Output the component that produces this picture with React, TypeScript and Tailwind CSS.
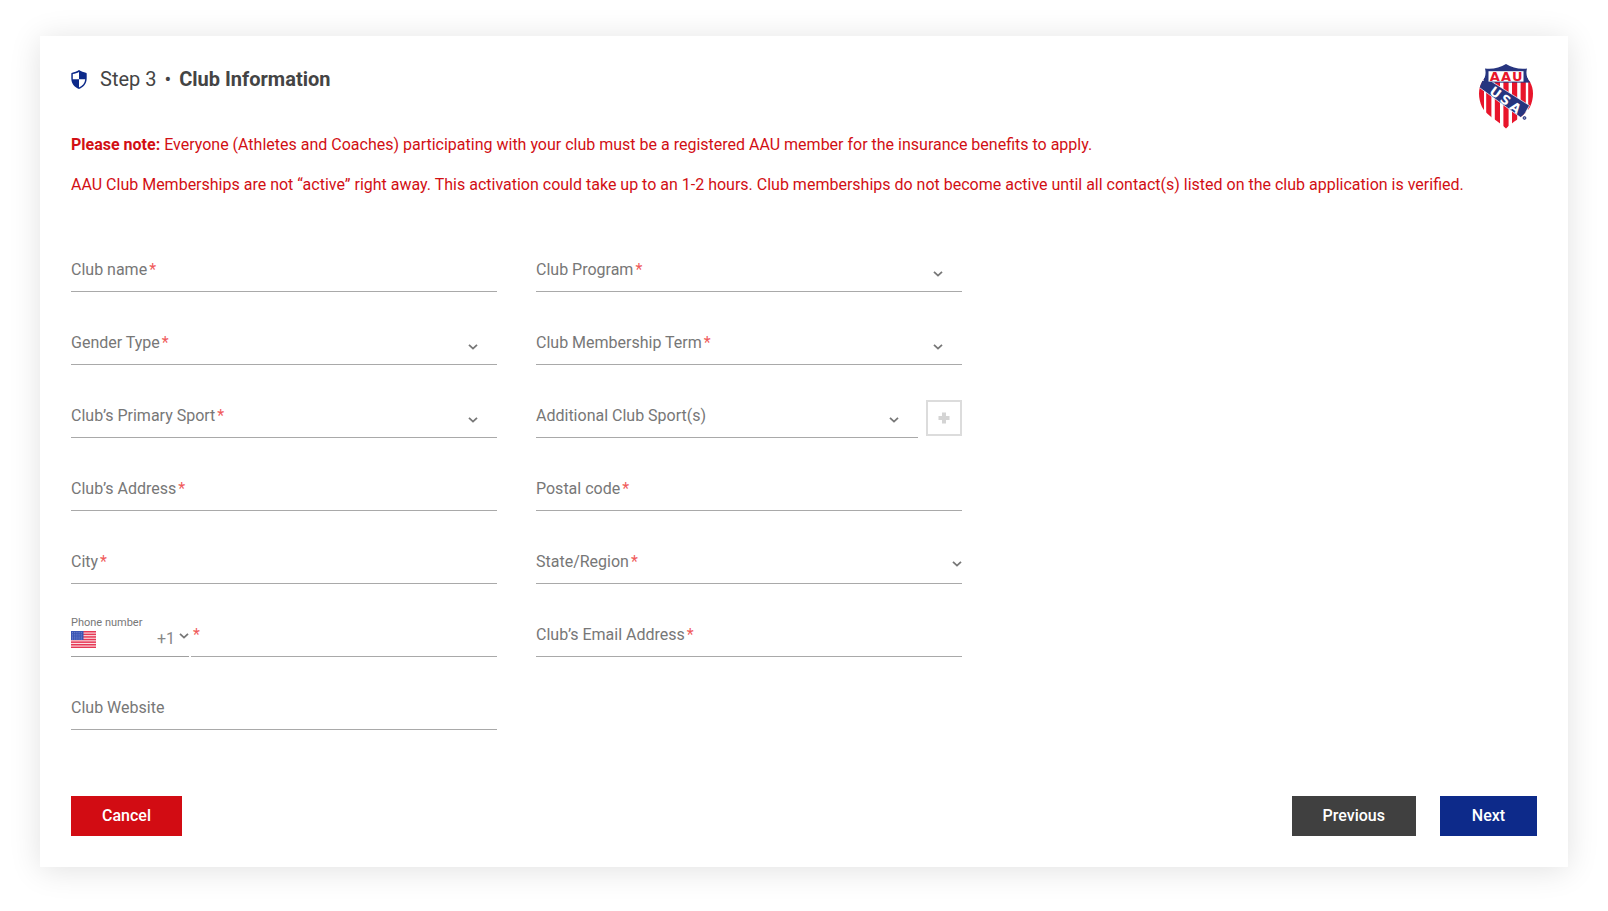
import { useId } from "react";

function ShieldIcon() {
  return (
    <svg viewBox="0 0 16 19" className="h-[19px] w-4 shrink-0" aria-hidden="true">
      <path
        fill="#0d2a8a"
        fillRule="evenodd"
        d="M8 0C5.8 1.5 3.3 2.4 1.2 2.7C0.6 2.8 0.3 3.1 0.3 3.7V8.2C0.3 13.6 3.4 17.2 8 19C12.6 17.2 15.7 13.6 15.7 8.2V3.7C15.7 3.1 15.4 2.8 14.8 2.7C12.7 2.4 10.2 1.5 8 0ZM8 1.9V9.2H1.8V4.1C4 3.7 6.2 2.9 8 1.9ZM8 9.2H14.2C13.9 13 11.6 15.8 8 17.4Z"
      />
    </svg>
  );
}

function Logo() {
  return (
    <svg viewBox="0 0 54 65" className="h-[65px] w-[54px] shrink-0" role="img" aria-label="AAU USA">
      <defs>
        <clipPath id="shield">
          <path d="M27 0C21 4 13 5.5 6 4.5C7.5 10 6 14 3 18C-1 25 -1 34 3 43C8 52 18 56 27 64.5C36 56 46 52 51 43C55 34 55 25 51 18C48 14 46.5 10 48 4.5C41 5.5 33 4 27 0Z" />
        </clipPath>
      </defs>
      <g clipPath="url(#shield)">
        <rect width="54" height="65" fill="#fff" />
        <g fill="#e8152b">
          <rect x="0" y="12" width="5" height="53" />
          <rect x="7.2" y="12" width="5.2" height="53" />
          <rect x="15.8" y="12" width="5.2" height="53" />
          <rect x="24.4" y="12" width="5.2" height="53" />
          <rect x="33" y="12" width="5.2" height="53" />
          <rect x="41.6" y="12" width="5.2" height="53" />
          <rect x="49.2" y="12" width="5" height="53" />
        </g>
        <path d="M0 0H54V18.6H0Z" fill="#27357f" />
        <path d="M3 16.5H11L50.5 41.5L43 54.5L-1 22.5Z" fill="#27357f" stroke="#fff" strokeWidth="0.7" />
        <path d="M5 14H49V18.2H5Z" fill="#27357f" />
      </g>
      <rect x="9.5" y="7.2" width="35" height="10.4" fill="#fff" />
      <text x="15.8 27 38.2" y="17" textAnchor="middle" fontSize="13" fontWeight="700" fill="#e8152b" fontFamily="DejaVu Sans, sans-serif">
        AAU
      </text>
      <text
        transform="translate(26.5 36) rotate(37)"
        x="-12.5 0 12.5"
        y="4.6"
        textAnchor="middle"
        fontSize="13"
        fontWeight="700"
        fill="#fff"
        fontFamily="DejaVu Sans, sans-serif"
      >
        USA
      </text>
      <circle cx="45.5" cy="54" r="1.4" fill="#8c93bb" stroke="#27357f" strokeWidth="1" />
    </svg>
  );
}

function Chevron({ className }: { className: string }) {
  return (
    <svg viewBox="0 0 10 6" className={`pointer-events-none h-1.5 w-2.5 ${className}`} fill="none" stroke="#777" strokeWidth="1.8" aria-hidden="true">
      <path d="M1 0.8L5 4.6L9 0.8" />
    </svg>
  );
}

function UsFlag() {
  return (
    <svg viewBox="0 0 25 17" className="pointer-events-none h-[17px] w-[25px]" aria-hidden="true">
      <rect width="25" height="17" fill="#fbdfe3" />
      <g fill="#e63956">
        <rect y="0" width="25" height="1.5" />
        <rect y="2.6" width="25" height="1.5" />
        <rect y="5.2" width="25" height="1.5" />
        <rect y="7.8" width="25" height="1.5" />
        <rect y="10.4" width="25" height="1.5" />
        <rect y="13" width="25" height="1.5" />
        <rect y="15.6" width="25" height="1.4" />
      </g>
      <rect width="12.5" height="9" fill="#3a55b4" />
      <g stroke="#8fa0dc" strokeWidth="0.8" strokeDasharray="1 1.2">
        <path d="M1 1.7H12M1 3.9H12M1 6.1H12M1 8H12" />
      </g>
    </svg>
  );
}

function Star() {
  return (
    <span className="ml-0.5 text-[#f05b5b]" aria-hidden="true">
      *
    </span>
  );
}

type FieldProps = {
  label: string;
  required?: boolean;
  kind?: "text" | "email" | "tel" | "url" | "select" | "region";
};

function Field({ label, required = false, kind = "text" }: FieldProps) {
  const id = useId();
  const control =
    "col-start-1 row-start-1 h-12 w-full appearance-none border-b border-[#a9a9a9] bg-transparent text-base text-[#444] outline-none focus:border-[#0d2a8a]";
  const isSelect = kind === "select" || kind === "region";
  return (
    <div className="grid min-w-0 flex-1">
      {isSelect ? (
        <select id={id} className={control} defaultValue="">
          <option value="" />
        </select>
      ) : (
        <input id={id} type={kind} className={control} />
      )}
      <label htmlFor={id} className="pointer-events-none col-start-1 row-start-1 mt-3.5 self-start text-base leading-6 text-[#777]">
        {label}
        {required && <Star />}
      </label>
      {kind === "select" && <Chevron className="col-start-1 row-start-1 mt-[27px] mr-[19px] justify-self-end" />}
      {kind === "region" && <Chevron className="col-start-1 row-start-1 mt-[25px] justify-self-end" />}
    </div>
  );
}

function PhoneField() {
  return (
    <div className="flex gap-0.5">
      <div className="grid w-[118px]">
        <select
          id="dial-code"
          className="col-start-1 row-start-1 h-12 appearance-none border-b border-[#a0a0a0] bg-transparent pt-3 pr-3.5 text-right text-base text-[#888] outline-none"
          defaultValue="+1"
        >
          <option>+1</option>
        </select>
        <label htmlFor="dial-code" className="pointer-events-none col-start-1 row-start-1 mt-1.5 self-start text-[11px] leading-4 text-[#777]">
          Phone number
        </label>
        <div className="pointer-events-none col-start-1 row-start-1 mt-[22px] self-start">
          <UsFlag />
        </div>
        <Chevron className="col-start-1 row-start-1 mt-6 justify-self-end" />
      </div>
      <div className="grid flex-1">
        <input
          id="phone"
          type="tel"
          aria-label="Phone number"
          className="col-start-1 row-start-1 h-12 w-full border-b border-[#a9a9a9] bg-transparent pl-4 text-base outline-none"
        />
        <label htmlFor="phone" className="pointer-events-none col-start-1 row-start-1 mt-3.5 self-start text-base leading-6">
          <Star />
        </label>
      </div>
    </div>
  );
}

export default function App() {
  const button = "h-10 min-w-[97px] px-[31px] text-base font-medium text-white";
  return (
    <main className="px-10 pt-9 pb-11 font-[Roboto,sans-serif]">
      <form className="bg-white px-[31px] pb-[31px] shadow-[0_3px_30px_rgba(0,0,0,0.12)]">
        <header className="flex items-start justify-between pt-7">
          <h1 className="flex items-center text-xl leading-[30px] text-[#444]">
            <ShieldIcon />
            <span className="ml-[13px]">Step 3</span>
            <span className="mx-2">•</span>
            <strong className="font-bold">Club Information</strong>
          </h1>
          <div className="mb-1 pr-1">
            <Logo />
          </div>
        </header>
        <div className="flex flex-col gap-4 text-base leading-6 text-[#d20f14]">
          <p>
            <strong>Please note:</strong> Everyone (Athletes and Coaches) participating with your club must be a registered AAU member for the insurance benefits to apply.
          </p>
          <p>
            AAU Club Memberships are not “active” right away. This activation could take up to an 1-2 hours. Club memberships do not become active until all contact(s) listed on the club application is verified.
          </p>
        </div>
        <div className="mt-[47px] grid max-w-[891px] grid-cols-2 gap-x-[39px] gap-y-[25px]">
          <Field label="Club name" required />
          <Field label="Club Program" required kind="select" />
          <Field label="Gender Type" required kind="select" />
          <Field label="Club Membership Term" required kind="select" />
          <Field label="Club’s Primary Sport" required kind="select" />
          <div className="flex gap-2">
            <Field label="Additional Club Sport(s)" kind="select" />
            <button type="button" aria-label="Add sport" className="mt-2.5 flex size-9 items-center justify-center border-2 border-[#dcdcdc]">
              <svg viewBox="0 0 12 12" className="size-3" fill="#d4d4d4" aria-hidden="true">
                <path d="M4 0.5H8V4H11.5V8H8V11.5H4V8H0.5V4H4Z" />
              </svg>
            </button>
          </div>
          <Field label="Club’s Address" required />
          <Field label="Postal code" required />
          <Field label="City" required />
          <Field label="State/Region" required kind="region" />
          <PhoneField />
          <Field label="Club’s Email Address" required kind="email" />
          <Field label="Club Website" kind="url" />
        </div>
        <footer className="mt-[66px] flex items-center">
          <button type="button" className={`${button} mr-auto bg-[#d20c13]`}>
            Cancel
          </button>
          <button type="button" className={`${button} mr-6 bg-[#404040]`}>
            Previous
          </button>
          <button type="submit" className={`${button} bg-[#0d2a8a]`}>
            Next
          </button>
        </footer>
      </form>
    </main>
  );
}
